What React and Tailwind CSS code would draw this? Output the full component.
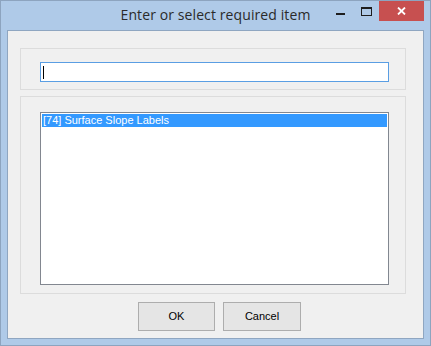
import React from 'react';

const App = () => {
    return (
        <div className="w-[431px] h-[346px] border border-[#8da4bf] bg-[#afcae8] flex flex-col" style={{ fontFamily: '"Liberation Sans", Arial, sans-serif' }}>
            {/* title bar */}
            <div className="h-[29px] relative flex items-center justify-center">
                <span className="text-[14px] text-[#2a2a2a] -mt-[2px] tracking-[0.1px]" style={{ fontFamily: '"Open Sans", "Noto Sans", sans-serif' }}>Enter or select required item</span>
                <div className="absolute right-[6px] top-0 flex items-start">
                    <div className="w-[26px] h-[20px] flex items-start justify-center pt-[12px]">
                        <div className="w-[9px] h-[2px] bg-[#1e1e1e]" />
                    </div>
                    <div className="w-[26px] h-[20px] flex items-start justify-center pt-[6px]">
                        <div className="w-[11px] h-[9px] border border-t-2 border-[#1e1e1e]" />
                    </div>
                    <div className="w-[45px] h-[20px] bg-[#c75050] flex items-center justify-center">
                        <svg width="9" height="8" viewBox="0 0 9 8">
                            <path d="M1 0.5 L8 7.5 M8 0.5 L1 7.5" stroke="#fff" strokeWidth="1.8" />
                        </svg>
                    </div>
                </div>
            </div>

            {/* client */}
            <div className="flex-1 mx-[6px] mb-[6px] border border-[#8fa6c1] bg-[#f0f0f0] flex flex-col pl-[12px] pt-[17px]">
                <div className="w-[386px] h-[42px] border border-[#dcdcdc] pl-[19px] pt-[13px]">
                    <div className="w-[349px] h-[20px] border border-[#5a9ee3] bg-white flex items-center pl-[2px]">
                        <div className="w-[1px] h-[13px] bg-black" />
                    </div>
                </div>
                <div className="w-[386px] h-[198px] border border-[#dcdcdc] mt-[6px] pl-[19px] pt-[15px]">
                    <div className="w-[349px] h-[173px] border border-[#828790] bg-white p-[1px]">
                        <div className="h-[13px] bg-[#3399ff] text-white text-[11px] leading-[13px] pl-[1px]">[74] Surface Slope Labels</div>
                    </div>
                </div>
                <div className="flex gap-[8px] mt-[8px] ml-[118px]">
                    <button className="w-[77px] h-[29px] border border-[#adadad] bg-[#e5e5e5] text-[11px] text-black">OK</button>
                    <button className="w-[78px] h-[29px] border border-[#adadad] bg-[#e5e5e5] text-[11px] text-black">Cancel</button>
                </div>
            </div>
        </div>
    );
};

export default App;
